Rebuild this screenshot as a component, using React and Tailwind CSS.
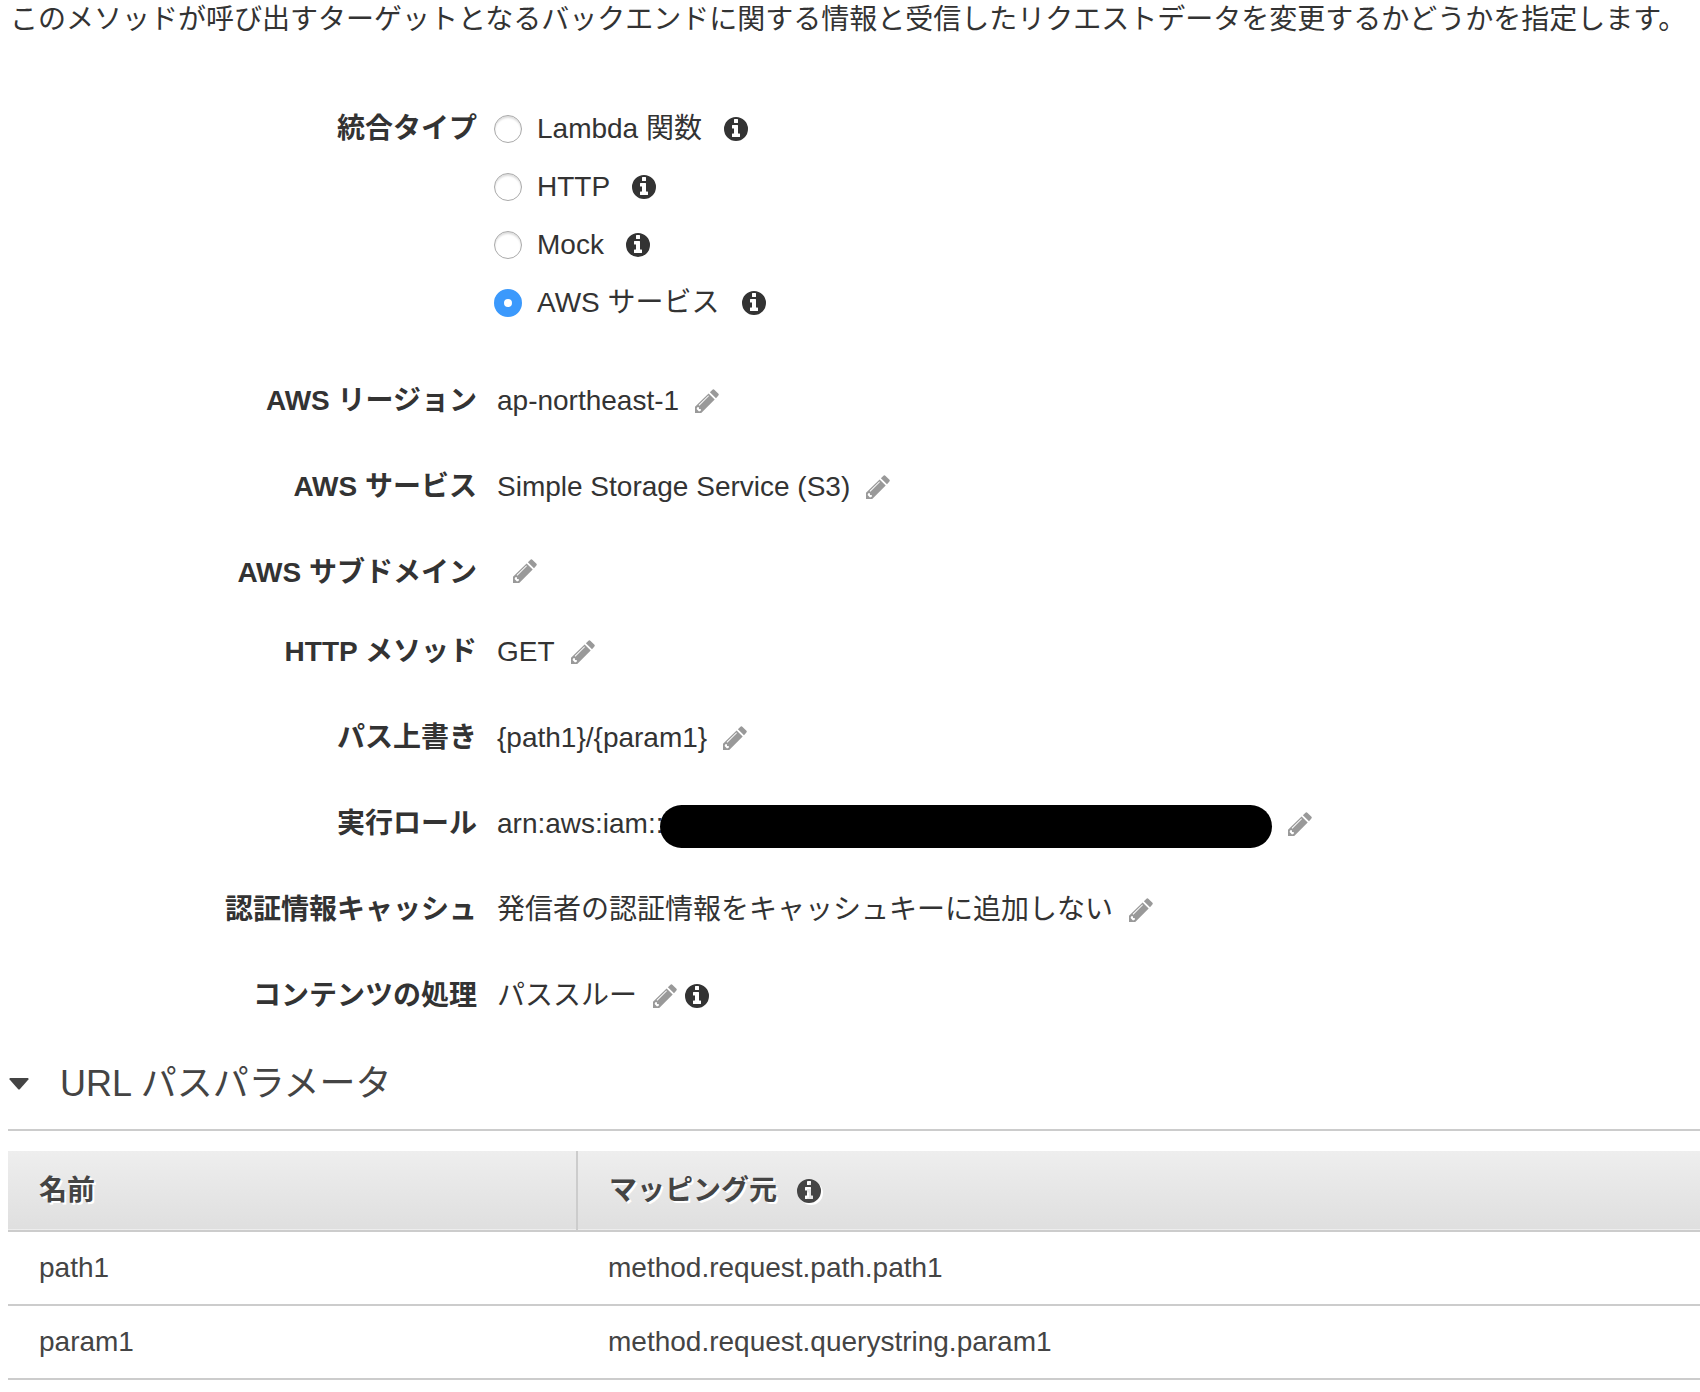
import { useState } from "react";

const types = [
  { id: "lambda", label: "Lambda 関数" },
  { id: "http", label: "HTTP" },
  { id: "mock", label: "Mock" },
  { id: "aws", label: "AWS サービス" },
];

const fields = [
  { label: "AWS リージョン", value: "ap-northeast-1" },
  { label: "AWS サービス", value: "Simple Storage Service (S3)" },
  { label: "AWS サブドメイン", value: "", short: true },
  { label: "HTTP メソッド", value: "GET" },
  { label: "パス上書き", value: "{path1}/{param1}" },
  { label: "実行ロール", value: "arn:aws:iam::", redacted: true },
  {
    label: "認証情報キャッシュ",
    value: "発信者の認証情報をキャッシュキーに追加しない",
  },
  { label: "コンテンツの処理", value: "パススルー", info: true },
];

const params = [
  { name: "path1", source: "method.request.path.path1" },
  { name: "param1", source: "method.request.querystring.param1" },
];

function PencilIcon() {
  return (
    <svg viewBox="0 0 24 24" className="block size-6" fill="#999">
      <path d="M17.2 0.9q1.2-1.2 2.4 0l3.6 3.5q1.2 1.2 0 2.4l-2.2 2.4-6.1-6z" />
      <path
        fillRule="evenodd"
        d="M13.6 4.4l6.1 6L7 23.2 6.2 24H0V17.8zM13.3 6.4L3.6 16l0.7 0.7L14 7.1zM2.2 18.2L1.6 20l2.4 2.4 1.8-0.6V20H4v-1.8z"
      />
    </svg>
  );
}

function InfoButton({ label }) {
  return (
    <button type="button" aria-label={label} className="block">
      <svg viewBox="0 0 24 24" className="block size-6" fill="currentColor">
        <path
          fillRule="evenodd"
          d="M12 0a12 12 0 1 1 0 24a12 12 0 1 1 0-24zM10.5 2a.5.5 0 0 0-.5.5V5.500a.5.5 0 0 0 .5.5h3a.5.5 0 0 0 .5-.5V2.500a.5.5 0 0 0-.5-.5zM8.500 8a.5.5 0 0 0-.5.5V11a.5.5 0 0 0 .5.5H10v5H8.500a.5.5 0 0 0-.5.5v2.500a.5.5 0 0 0 .5.5h7a.5.5 0 0 0 .5-.5V17a.5.5 0 0 0-.5-.5H14v-8a.5.5 0 0 0-.5-.5z"
        />
      </svg>
    </button>
  );
}

function FieldRow({ label, value, short, redacted, info }) {
  return (
    <div className={short ? "flex h-[79px] items-start" : "flex h-[86px] items-start"}>
      <dt className="w-[477px] shrink-0 text-right font-bold">{label}</dt>
      <dd className="ml-5 flex min-h-9 items-center">
        <span>{value}</span>
        {redacted && (
          <span className="relative -mt-1 -mb-2 -ml-1 h-[43px] w-[612px] rounded-full bg-black" />
        )}
        <button type="button" aria-label={`${label} 編集`} className="ml-4">
          <PencilIcon />
        </button>
        {info && (
          <span className="ml-2">
            <InfoButton label={`${label} 情報`} />
          </span>
        )}
      </dd>
    </div>
  );
}

export default function App() {
  const [type, setType] = useState("aws");
  const [open, setOpen] = useState(true);

  return (
    <main className="min-h-screen overflow-hidden bg-white font-['Liberation_Sans','Noto_Sans_CJK_JP',sans-serif] text-[28px] leading-[40px] text-[#333]">
      <p className="pl-[10px]">
        このメソッドが呼び出すターゲットとなるバックエンドに関する情報と受信したリクエストデータを変更するかどうかを指定します。
      </p>

      <fieldset className="mt-[69px] flex">
        <legend className="float-left w-[477px] text-right font-bold">
          統合タイプ
        </legend>
        <div className="ml-[17px] flex flex-col gap-[18px]">
          {types.map(({ id, label }) => (
            <div key={id} className="flex items-center">
              <input
                id={id}
                type="radio"
                name="type"
                checked={type === id}
                onChange={() => setType(id)}
                className="size-7 appearance-none rounded-full border border-[#aaa] bg-white shadow-[inset_0_2px_2px_#ddd] checked:border-[10px] checked:border-[#3b99fc] checked:shadow-none"
              />
              <label htmlFor={id} className="ml-[15px] mr-[22px]">
                {label}
              </label>
              <InfoButton label={`${label} 情報`} />
            </div>
          ))}
        </div>
      </fieldset>

      <dl className="mt-[58px]">
        {fields.map((field) => (
          <FieldRow key={field.label} {...field} />
        ))}
      </dl>

      <section className="ml-2 text-[#444]">
        <h2 className="border-b-2 border-[#ccc] pb-[23px] text-4xl leading-[44px]">
          <button
            type="button"
            aria-expanded={open}
            onClick={() => setOpen(!open)}
            className="flex items-center"
          >
            <svg viewBox="0 0 20 12" className="ml-px mr-[31px] h-3 w-5" fill="currentColor">
              <path d="M1 0h18q1 0.6 0.4 1.6L11 11q-1 1-2 0L0.6 1.6Q0 0.6 1 0z" />
            </svg>
            URL パスパラメータ
          </button>
        </h2>
        {open && (
          <table className="mt-5 w-full table-fixed border-collapse text-left">
            <thead>
              <tr className="h-20 border-b-2 border-[#ccc] bg-linear-to-b from-[#eee] to-[#dfdfdf] [text-shadow:2px_2px_0_#fff]">
                <th className="w-[569px] border-r-2 border-[#ccc] pl-[31px]">名前</th>
                <th className="pl-[31px]">
                  <div className="flex items-center gap-5">
                    マッピング元
                    <span className="drop-shadow-[2px_2px_0_#fff]">
                      <InfoButton label="マッピング元 情報" />
                    </span>
                  </div>
                </th>
              </tr>
            </thead>
            <tbody>
              {params.map(({ name, source }) => (
                <tr key={name} className="h-[74px] border-b-2 border-[#ccc]">
                  <td className="pl-[31px]">{name}</td>
                  <td className="pl-[31px]">{source}</td>
                </tr>
              ))}
            </tbody>
          </table>
        )}
      </section>
    </main>
  );
}
